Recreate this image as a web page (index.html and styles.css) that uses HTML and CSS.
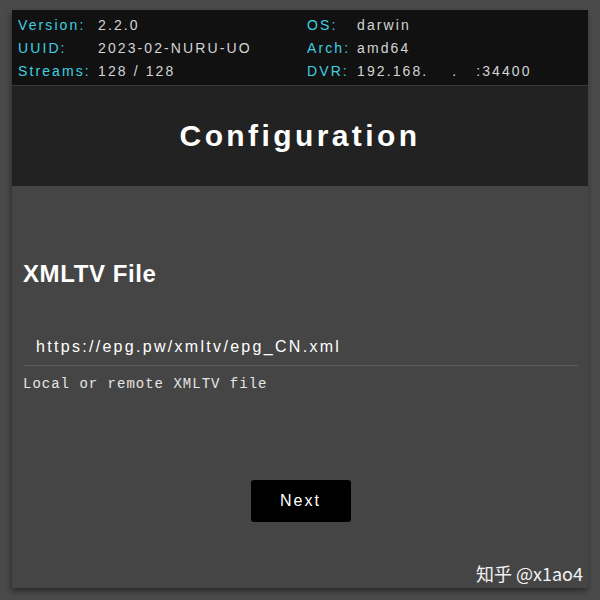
FILE: index.html
```html
<!DOCTYPE html>
<html lang="en">
<head>
    <meta charset="UTF-8">
    <meta name="viewport" content="width=device-width, initial-scale=1.0">
    <title>Configuration</title>
    <link rel="stylesheet" href="styles.css">
</head>
<body>
    <div class="panel">
        <div class="status">
            <span class="key">Version:</span><span class="val">2.2.0</span>
            <span class="key">OS:</span><span class="val">darwin</span>
            <span class="key">UUID:</span><span class="val">2023-02-NURU-UO</span>
            <span class="key">Arch:</span><span class="val">amd64</span>
            <span class="key">Streams:</span><span class="val">128 / 128</span>
            <span class="key">DVR:</span><span class="val">192.168.&nbsp;&nbsp;&nbsp;&nbsp;.&nbsp;&nbsp;&nbsp;:34400</span>
        </div>
        <div class="header">
            <h1>Configuration</h1>
        </div>
        <div class="content">
            <h2>XMLTV File</h2>
            <input class="field" type="text" value="https://epg.pw/xmltv/epg_CN.xml">
            <p class="hint">Local or remote XMLTV file</p>
            <div class="actions">
                <button class="btn">Next</button>
            </div>
            <div class="credit">知乎 @x1ao4</div>
        </div>
    </div>
</body>
</html>
```

FILE: styles.css
```css
body {
    margin: 0;
    padding: 10px 12px;
    background: #4a4a4a;
    font-family: "Liberation Sans", Arial, sans-serif;
    height: 600px;
    box-sizing: border-box;
}

.panel {
    height: 578px;
    background: #454545;
    box-shadow: -1px 3px 6px rgba(0, 0, 0, 0.45);
    display: flex;
    flex-direction: column;
}

.status {
    background: #111;
    border-bottom: 1px solid #3a3a3a;
    padding: 3px 6px 3px;
    display: grid;
    grid-template-columns: 80px 209px 50px 1fr;
    grid-auto-rows: 23px;
    align-items: center;
    font-size: 14px;
    letter-spacing: 2.1px;
}

.key {
    color: #40cfe0;
}

.val {
    color: #d4d4d4;
}

.header {
    height: 100px;
    background: #222;
    display: flex;
    align-items: center;
    justify-content: center;
}

h1 {
    margin: 0;
    color: #fff;
    font-size: 30px;
    letter-spacing: 3.4px;
}

.content {
    flex: 1;
    padding: 0 10px 0 11px;
    display: flex;
    flex-direction: column;
    position: relative;
}

h2 {
    margin: 74px 0 0;
    color: #fff;
    font-size: 24px;
    letter-spacing: 0.6px;
}

.field {
    margin-top: 44px;
    padding: 6px 13px 9px;
    background: transparent;
    border: none;
    border-bottom: 1px solid #5c5c5c;
    color: #fff;
    font-family: "Liberation Sans", Arial, sans-serif;
    font-size: 16px;
    letter-spacing: 2.3px;
    outline: none;
}

.hint {
    margin: 10px 0 0;
    color: #e6e6e6;
    font-family: "Liberation Mono", "Courier New", monospace;
    font-size: 14px;
    letter-spacing: 1px;
}

.actions {
    margin-top: 88px;
    display: flex;
    justify-content: center;
}

.btn {
    width: 100px;
    height: 42px;
    background: #000;
    color: #fff;
    border: none;
    border-radius: 3px;
    font-family: "Liberation Sans", Arial, sans-serif;
    font-size: 16px;
    letter-spacing: 2px;
    cursor: pointer;
}

.credit {
    position: absolute;
    right: 5px;
    bottom: 2px;
    color: #f2f2f2;
    font-family: "Noto Sans CJK SC", sans-serif;
    font-size: 18px;
}
```
